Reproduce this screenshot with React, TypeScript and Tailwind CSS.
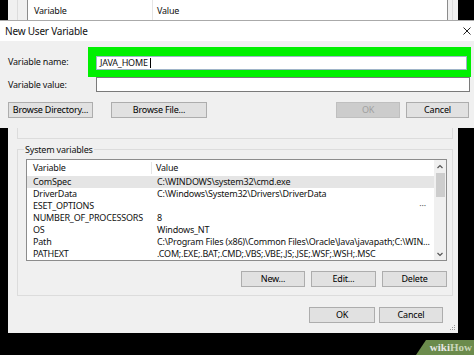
import React from 'react';

// System variables shown in the lower list
const sysVars: { name: string; value: string; more?: boolean }[] = [
  { name: 'ComSpec', value: 'C:\\WINDOWS\\system32\\cmd.exe' },
  { name: 'DriverData', value: 'C:\\Windows\\System32\\Drivers\\DriverData' },
  { name: 'ESET_OPTIONS', value: '', more: true },
  { name: 'NUMBER_OF_PROCESSORS', value: '8' },
  { name: 'OS', value: 'Windows_NT' },
  { name: 'Path', value: 'C:\\Program Files (x86)\\Common Files\\Oracle\\Java\\javapath;C:\\WIN...' },
  { name: 'PATHEXT', value: '.COM;.EXE;.BAT;.CMD;.VBS;.VBE;.JS;.JSE;.WSF;.WSH;.MSC' },
];

const Btn: React.FC<{ label: string; w: string; disabled?: boolean }> = ({ label, w, disabled }) => (
  <div
    className={
      disabled
        ? `${w} h-[16px] flex items-center justify-center whitespace-nowrap border border-[#bfbfbf] bg-[#cccccc] text-[#a0a0a0]`
        : `${w} h-[16px] flex items-center justify-center whitespace-nowrap border border-[#adadad] bg-[#e1e1e1] text-black`
    }
  >
    {label}
  </div>
);

const App: React.FC = () => {
  return (
    <div className="relative w-[474px] h-[355px] bg-black overflow-hidden font-['Noto_Sans',sans-serif] text-[9px] tracking-[-0.2px] text-[#111]">
      {/* Environment Variables window behind */}
      <div className="absolute left-[8px] top-0 w-[450px] h-[333px] bg-[#f0f0f0] flex flex-col">
        {/* user variables group (mostly hidden) */}
        <div className="ml-[9px] w-[436px] border-l border-r border-b border-[#dcdcdc] flex flex-col pb-[10px]">
          <div className="ml-[9px] w-[421px] h-[20px] bg-white border-l border-r border-[#8c8c8c] flex">
            <div className="w-[125px] pl-[6px] pt-[4px] border-r border-[#e5e5e5]">Variable</div>
            <div className="pl-[4px] pt-[4px]">Value</div>
          </div>
          <div className="mt-[92px] flex justify-end gap-[6px] pr-[6px]">
            <Btn label="New..." w="w-[65px]" />
            <Btn label="Edit..." w="w-[65px]" />
            <Btn label="Delete" w="w-[65px]" />
          </div>
        </div>

        {/* system variables group */}
        <div className="mt-[10px] ml-[9px] w-[436px] border border-[#dcdcdc] flex flex-col pb-[8px]">
          <div className="-mt-[7px] ml-[6px] w-fit px-[1px] bg-[#f0f0f0] leading-[13px]">System variables</div>
          <div className="mt-[3px] ml-[8px] w-[421px] h-[102px] bg-white border border-[#8c8c8c] flex overflow-hidden">
            <div className="flex-1 flex flex-col leading-[12px]">
              <div className="h-[17px] flex items-center">
                <div className="w-[125px] pl-[6px] border-r border-[#e5e5e5]">Variable</div>
                <div className="pl-[4px]">Value</div>
              </div>
              {sysVars.map((v, i) => (
                <div key={v.name} className={i === 0 ? 'h-[12.3px] flex items-center bg-[#e5e5e5]' : 'h-[12.3px] flex items-center'}>
                  <div className="w-[125px] pl-[6px] whitespace-nowrap">{v.name}</div>
                  <div className="pl-[5px] whitespace-nowrap flex-1">{v.value}</div>
                  {v.more && <div className="pr-[8px] text-[#666]">···</div>}
                </div>
              ))}
            </div>
            {/* scrollbar */}
            <div className="w-[12px] bg-[#f0f0f0] flex flex-col items-center">
              <svg width="8" height="10" viewBox="0 0 8 10" className="mt-[2px]">
                <path d="M1.5 6 L4 3.5 L6.5 6" stroke="#555" strokeWidth="1.2" fill="none" />
              </svg>
              <div className="mt-[1px] w-[9px] h-[24px] bg-[#cdcdcd]" />
              <div className="flex-1" />
              <svg width="8" height="10" viewBox="0 0 8 10" className="mb-[1px]">
                <path d="M1.5 4 L4 6.5 L6.5 4" stroke="#555" strokeWidth="1.2" fill="none" />
              </svg>
            </div>
          </div>
          <div className="mt-[10px] flex justify-end gap-[6px] pr-[5px]">
            <Btn label="New..." w="w-[64px]" />
            <Btn label="Edit..." w="w-[65px]" />
            <Btn label="Delete" w="w-[65px]" />
          </div>
        </div>

        {/* OK / Cancel */}
        <div className="mt-[11px] flex justify-end gap-[4px] pr-[15px]">
          <Btn label="OK" w="w-[66px]" />
          <Btn label="Cancel" w="w-[64px]" />
        </div>
        <div className="flex-1 flex items-end justify-end pr-[2px] pb-[2px]">
          <svg width="6" height="6" viewBox="0 0 6 6">
            <rect x="4" y="0" width="1" height="1" fill="#999" />
            <rect x="2" y="2" width="1" height="1" fill="#999" />
            <rect x="4" y="2" width="1" height="1" fill="#999" />
            <rect x="0" y="4" width="1" height="1" fill="#999" />
            <rect x="2" y="4" width="1" height="1" fill="#999" />
            <rect x="4" y="4" width="1" height="1" fill="#999" />
          </svg>
        </div>
      </div>

      {/* New User Variable dialog */}
      <div className="absolute left-0 top-[20px] w-[474px] h-[108px] flex flex-col border-t border-[#aaaaaa]">
        <div className="h-[20px] bg-white flex items-center justify-between pl-[5px] pr-[2px]">
          <span className="text-[10px]">New User Variable</span>
          <svg width="10" height="10" viewBox="0 0 10 10">
            <path d="M1.5 1.5 L8.5 8.5 M8.5 1.5 L1.5 8.5" stroke="#222" strokeWidth="1" />
          </svg>
        </div>
        <div className="flex-1 bg-[#f0f0f0] flex flex-col">
          <div className="mt-[6px] h-[30px] flex items-center">
            <div className="w-[88px] pl-[8px]">Variable name:</div>
            <div className="w-[383px] h-[30px] bg-[#00f000] pl-[8px] pr-[4px] pt-[9px] pb-[7px]">
              <div className="h-[14px] bg-white border border-[#9fb4c8] flex items-center pl-[3px]">
                JAVA_HOME<span className="ml-[2px] w-[1px] h-[10px] bg-black" />
              </div>
            </div>
          </div>
          <div className="h-[15px] flex items-center">
            <div className="w-[96px] pl-[8px]">Variable value:</div>
            <div className="w-[374px] h-[15px] bg-white border border-[#7a7a7a]" />
          </div>
          <div className="mt-[10px] flex pl-[8px] pr-[5px]">
            <Btn label="Browse Directory..." w="w-[85px]" />
            <div className="ml-[18px]">
              <Btn label="Browse File..." w="w-[96px]" />
            </div>
            <div className="flex-1" />
            <Btn label="OK" w="w-[64px]" disabled />
            <div className="ml-[6px]">
              <Btn label="Cancel" w="w-[63px]" />
            </div>
          </div>
        </div>
      </div>

      {/* wikiHow watermark */}
      <div className="absolute right-0 bottom-0 w-[58px] h-[15px] bg-[#6b8b4c] [clip-path:polygon(10px_0,100%_0,100%_100%,0_100%)] flex items-center justify-end pr-[2px] font-['Liberation_Serif',serif] font-bold text-[11px] tracking-normal leading-none">
        <span className="text-[#e6e6e6]">wiki</span>
        <span className="text-[#c9d6b8]">How</span>
      </div>
    </div>
  );
};

export default App;
